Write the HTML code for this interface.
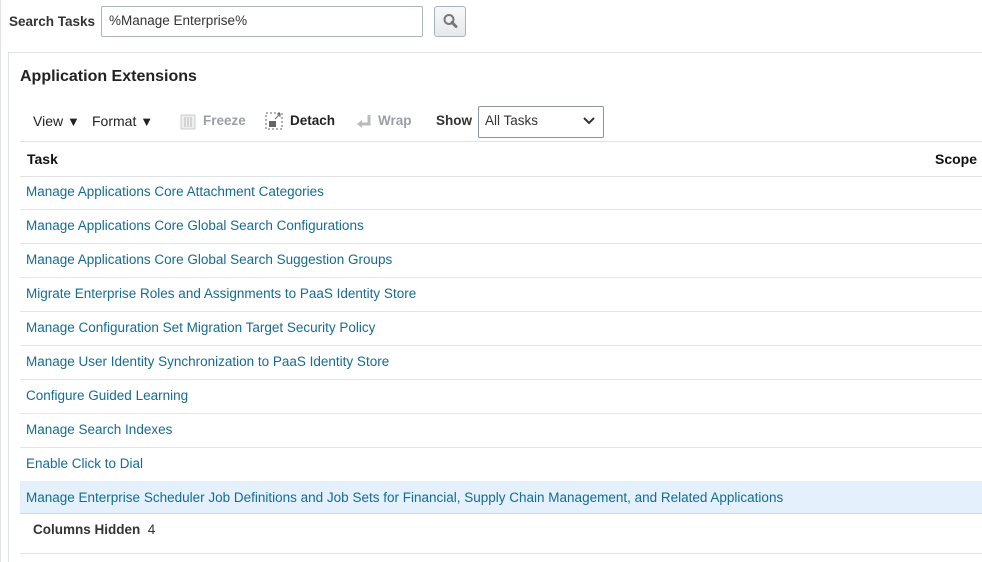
<html><head><style>
html,body{margin:0;width:982px;height:562px;overflow:hidden}
body{background:#fff;font-family:"Liberation Sans",sans-serif;position:relative}
.a{position:absolute}
.lnk{position:absolute;left:26px;font-size:13.5px;color:#146b94;}
.row{position:absolute;left:20px;width:962px;height:33px;border-bottom:1px solid #e2e6ea}
.tb{font-size:14px;color:#222;position:absolute;top:113px}
.dis{color:#9aa0a6;font-weight:bold}
</style></head><body>
<div class="a" style="left:0;top:0;width:1px;height:562px;background:#dfe3e8"></div>
<div class="a" style="left:9px;top:14px;font-size:13.5px;font-weight:bold;color:#333">Search Tasks</div>
<div class="a" style="left:101px;top:6px;width:320px;height:29px;border:1px solid #a9b4bd;border-radius:2px"></div>
<div class="a" style="left:109px;top:13px;font-size:13.5px;color:#333">%Manage Enterprise%</div>
<div class="a" style="left:434px;top:6px;width:30px;height:29px;border:1px solid #a9b4bd;border-radius:3px;background:linear-gradient(#f7f8f9,#e6e9ec)">
<svg width="30" height="29" viewBox="0 0 30 29"><circle cx="14" cy="12.5" r="4.5" fill="none" stroke="#777" stroke-width="2"/><path d="M17 15.5l4 4" stroke="#777" stroke-width="3" stroke-linecap="round"/></svg></div>
<div class="a" style="left:8px;top:52px;width:974px;height:510px;border-left:1px solid #dfe3e8;border-top:1px solid #dfe3e8;box-sizing:border-box"></div>
<div class="a" style="left:20px;top:68px;font-size:16px;font-weight:bold;color:#222">Application Extensions</div>
<div class="tb" style="left:33px">View <span style="font-size:13px">&#9660;</span></div>
<div class="tb" style="left:92px">Format <span style="font-size:13px">&#9660;</span></div>
<svg class="a" style="left:180px;top:114px" width="16" height="16"><rect x="1" y="1" width="14" height="14" fill="#eee" stroke="#ccc"/><path d="M5 3v10M8 3v10M11 3v10" stroke="#bbb"/></svg>
<div class="tb dis" style="left:203px;font-size:13.5px">Freeze</div>
<svg class="a" style="left:265px;top:112px" width="18" height="18"><rect x="1" y="1" width="16" height="16" fill="none" stroke="#666" stroke-dasharray="2 2"/><rect x="4" y="9" width="7" height="6" fill="#666"/><path d="M10 7l5-5M12 2h3v3" stroke="#666" fill="none"/></svg>
<div class="tb" style="left:290px;font-weight:bold;font-size:13.5px">Detach</div>
<svg class="a" style="left:356px;top:113px" width="16" height="16"><path d="M13 2v9H5" stroke="#bbb" stroke-width="3" fill="none"/><path d="M1 11l5-4v8z" fill="#bbb"/></svg>
<div class="tb dis" style="left:378px;font-size:13.5px">Wrap</div>
<div class="tb" style="left:436px;font-weight:bold;color:#333;font-size:13.5px">Show</div>
<div class="a" style="left:478px;top:106px;width:124px;height:30px;border:1px solid #8c969e;border-radius:2px"></div>
<div class="a" style="left:485px;top:113px;font-size:13.5px;color:#333">All Tasks</div>
<svg class="a" style="left:583px;top:117px" width="12" height="8"><path d="M1 1l5 5 5-5" stroke="#333" stroke-width="2" fill="none"/></svg>
<div class="a" style="left:20px;top:141px;width:962px;height:1px;background:#dfe3e8"></div>
<div class="a" style="left:27px;top:151px;font-size:14px;font-weight:bold;color:#111">Task</div>
<div class="a" style="left:935px;top:151px;font-size:14px;font-weight:bold;color:#111">Scope</div>
<div class="a" style="left:20px;top:176px;width:962px;height:1px;background:#dfe3e8"></div>
<div class="row" style="top:176px"></div><div class="lnk" style="top:184px">Manage Applications Core Attachment Categories</div>
<div class="row" style="top:210px"></div><div class="lnk" style="top:218px">Manage Applications Core Global Search Configurations</div>
<div class="row" style="top:244px"></div><div class="lnk" style="top:252px">Manage Applications Core Global Search Suggestion Groups</div>
<div class="row" style="top:278px"></div><div class="lnk" style="top:286px">Migrate Enterprise Roles and Assignments to PaaS Identity Store</div>
<div class="row" style="top:312px"></div><div class="lnk" style="top:320px">Manage Configuration Set Migration Target Security Policy</div>
<div class="row" style="top:346px"></div><div class="lnk" style="top:354px">Manage User Identity Synchronization to PaaS Identity Store</div>
<div class="row" style="top:380px"></div><div class="lnk" style="top:388px">Configure Guided Learning</div>
<div class="row" style="top:414px"></div><div class="lnk" style="top:422px">Manage Search Indexes</div>
<div class="row" style="top:448px"></div><div class="lnk" style="top:456px">Enable Click to Dial</div>
<div class="row" style="top:481px;height:32px;background:#e4f1fc;border-bottom:1px solid #cfd8e0"></div><div class="lnk" style="top:490px">Manage Enterprise Scheduler Job Definitions and Job Sets for Financial, Supply Chain Management, and Related Applications</div>
<div class="a" style="left:33px;top:522px;font-size:13.5px;color:#333"><b>Columns Hidden</b>&nbsp; 4</div>
<div class="a" style="left:20px;top:553px;width:962px;height:1px;background:#dfe3e8"></div>
</body></html>
